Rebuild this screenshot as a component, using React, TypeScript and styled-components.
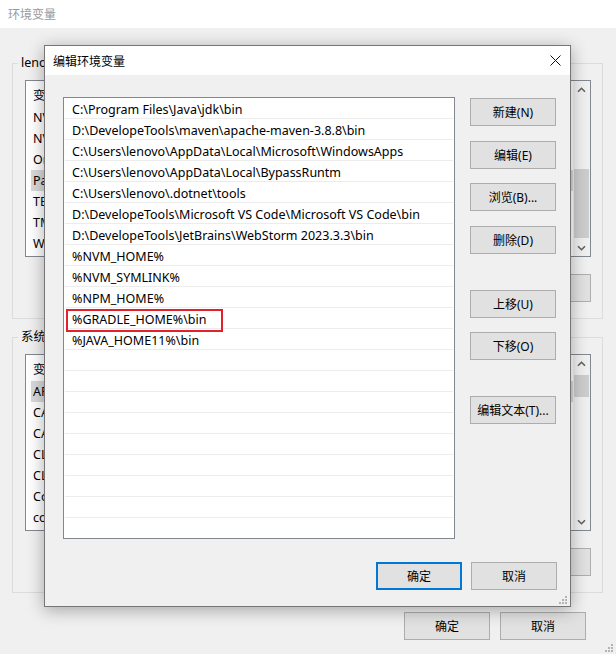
import React from "react";
import styled, { createGlobalStyle, css } from "styled-components";

const FONT = `"Microsoft YaHei UI", "Segoe UI", "Noto Sans", "Noto Sans CJK SC", sans-serif`;

const GlobalStyle = createGlobalStyle`
  html, body { margin: 0; padding: 0; background: #f0f0f0; }
  body { font-family: ${FONT}; font-size: 12px; color: #000; }
  * { box-sizing: border-box; }
`;

const Screen = styled.div`
  position: relative;
  width: 616px;
  height: 654px;
  overflow: hidden;
  background: #f0f0f0;
`;

/* ---------- background window: 环境变量 ---------- */

const BackWindow = styled.div`
  display: flex;
  flex-direction: column;
  width: 616px;
  height: 654px;
`;

const BackTitleBar = styled.div`
  height: 28px;
  flex: none;
  background: #fff;
  display: flex;
  align-items: center;
  padding-left: 8px;
  color: #9a9a9a;
  font-size: 12px;
`;

const BackBody = styled.div`
  flex: 1;
  display: flex;
  flex-direction: column;
  padding: 27px 13px 0 12px;
`;

const Group = styled.fieldset<{ $mt?: number }>`
  margin: ${(p) => p.$mt ?? 0}px 0 0 0;
  padding: 9px 11px 16px 12px;
  border: 1px solid #dcdcdc;
  display: flex;
  flex-direction: column;
  min-width: 0;
`;

const GroupLabel = styled.legend`
  margin-left: -7px;
  padding: 0 3px;
  line-height: 16px;
  font-size: 12.5px;
  white-space: nowrap;
`;

const VarList = styled.div`
  height: 177px;
  border: 1px solid #828790;
  background: #fff;
  display: flex;
`;

const VarListBody = styled.div`
  flex: 1;
  overflow: hidden;
  padding: 3px 0 0 5px;
  font-size: 12.5px;
`;

const VarHeader = styled.div`
  height: 23px;
  line-height: 23px;
  padding-left: 2px;
  white-space: nowrap;
`;

const VarRow = styled.div<{ $selected?: boolean }>`
  height: 21px;
  line-height: 22px;
  padding-left: 2px;
  white-space: nowrap;
  background: ${(p) => (p.$selected ? "#d9d9d9" : "transparent")};
`;

const ScrollBar = styled.div`
  width: 17px;
  flex: none;
  background: #f0f0f0;
  display: flex;
  flex-direction: column;
`;

const ScrollArrow = styled.div`
  height: 17px;
  flex: none;
  display: flex;
  align-items: center;
  justify-content: center;
`;

const ScrollTrack = styled.div`
  flex: 1;
  padding: 0 1px;
`;

const ScrollThumb = styled.div<{ $top: number; $height: number }>`
  margin-top: ${(p) => p.$top}px;
  height: ${(p) => p.$height}px;
  background: #cdcdcd;
`;

const GroupButtons = styled.div`
  margin-top: 17px;
  display: flex;
  justify-content: flex-end;
  gap: 10px;
`;

const BackFooter = styled.div`
  margin-top: 19px;
  display: flex;
  justify-content: flex-end;
  gap: 10px;
  padding-right: 17px;
`;

const Button = styled.button<{ $primary?: boolean; $mt?: number }>`
  width: 86px;
  height: 28px;
  flex: none;
  margin: ${(p) => p.$mt ?? 0}px 0 0 0;
  padding: 0;
  background: #e1e1e1;
  border: 1px solid #adadad;
  font-family: ${FONT};
  font-size: 12px;
  color: #000;
  white-space: nowrap;
  ${(p) =>
    p.$primary &&
    css`
      border: 2px solid #0078d7;
    `}
`;

const Grip = styled.svg<{ $right: number; $bottom: number }>`
  position: absolute;
  right: ${(p) => p.$right}px;
  bottom: ${(p) => p.$bottom}px;
`;

/* ---------- foreground dialog: 编辑环境变量 ---------- */

const Dialog = styled.div`
  position: absolute;
  left: 44px;
  top: 45px;
  width: 527px;
  height: 562px;
  border: 1px solid #767676;
  background: #f0f0f0;
  box-shadow: 0 3px 16px rgba(0, 0, 0, 0.32);
  display: flex;
  flex-direction: column;
`;

const DialogTitleBar = styled.div`
  height: 29px;
  flex: none;
  background: #fff;
  display: flex;
  align-items: center;
  justify-content: space-between;
  padding: 0 9px 0 8px;
  font-size: 12px;
  color: #000;
`;

const DialogBody = styled.div`
  flex: 1;
  display: flex;
  flex-direction: column;
  padding: 22px 13px 16px 18px;
`;

const DialogMain = styled.div`
  display: grid;
  grid-template-columns: 392px 86px;
  column-gap: 15px;
`;

const PathList = styled.div`
  height: 442px;
  border: 1px solid #828790;
  background: #fff;
  padding: 0 1px;
  overflow: hidden;
`;

const PathRow = styled.div`
  position: relative;
  height: 21px;
  line-height: 23px;
  border-bottom: 1px solid #ececec;
  padding-left: 7px;
  font-size: 12.5px;
  white-space: nowrap;
`;

const Highlight = styled.div`
  position: absolute;
  left: 1px;
  top: 1px;
  width: 157px;
  height: 23px;
  border: 2px solid #e3212b;
  pointer-events: none;
`;

const ButtonColumn = styled.div`
  display: flex;
  flex-direction: column;
  padding-top: 1px;
`;

const DialogFooter = styled.div`
  margin-top: 23px;
  display: flex;
  justify-content: flex-end;
  gap: 9px;
`;

/* ---------- drawings ---------- */

const Chevron = ({ down }: { down?: boolean }) => (
  <svg width="9" height="6" viewBox="0 0 9 6">
    <path
      d={down ? "M1 1.2 L4.5 4.7 L8 1.2" : "M1 4.8 L4.5 1.3 L8 4.8"}
      fill="none"
      stroke="#606060"
      strokeWidth="1.6"
    />
  </svg>
);

const CloseIcon = () => (
  <svg width="11" height="11" viewBox="0 0 11 11">
    <path d="M0.5 0.5 L10.5 10.5 M10.5 0.5 L0.5 10.5" stroke="#111" strokeWidth="1" />
  </svg>
);

const GripDots = ({ right, bottom }: { right: number; bottom: number }) => (
  <Grip $right={right} $bottom={bottom} width="8" height="8" viewBox="0 0 8 8">
    {[
      [6, 0],
      [3, 3],
      [6, 3],
      [0, 6],
      [3, 6],
      [6, 6],
    ].map(([x, y], i) => (
      <rect key={i} x={x} y={y} width="2" height="2" fill="#b4b4b4" />
    ))}
  </Grip>
);

const ScrollBox = ({ top, height }: { top: number; height: number }) => (
  <ScrollBar>
    <ScrollArrow>
      <Chevron />
    </ScrollArrow>
    <ScrollTrack>
      <ScrollThumb $top={top} $height={height} />
    </ScrollTrack>
    <ScrollArrow>
      <Chevron down />
    </ScrollArrow>
  </ScrollBar>
);

/* ---------- data ---------- */

const userVars = ["NVM_HOME", "NVM_SYMLINK", "OneDrive", "Path", "TEMP", "TMP", "WebStorm"];
const sysVars = ["APPDATA", "CATALINA_BASE", "CATALINA_HOME", "CLASSPATH", "CLASS_PATH", "ComSpec", "configsetroot"];

const paths = [
  "C:\\Program Files\\Java\\jdk\\bin",
  "D:\\DevelopeTools\\maven\\apache-maven-3.8.8\\bin",
  "C:\\Users\\lenovo\\AppData\\Local\\Microsoft\\WindowsApps",
  "C:\\Users\\lenovo\\AppData\\Local\\BypassRuntm",
  "C:\\Users\\lenovo\\.dotnet\\tools",
  "D:\\DevelopeTools\\Microsoft VS Code\\Microsoft VS Code\\bin",
  "D:\\DevelopeTools\\JetBrains\\WebStorm 2023.3.3\\bin",
  "%NVM_HOME%",
  "%NVM_SYMLINK%",
  "%NPM_HOME%",
  "%GRADLE_HOME%\\bin",
  "%JAVA_HOME11%\\bin",
];

const TOTAL_ROWS = 22;

export default function App() {
  const rows = Array.from({ length: TOTAL_ROWS }, (_, i) => paths[i] ?? "");
  return (
    <>
      <GlobalStyle />
      <Screen>
        <BackWindow>
          <BackTitleBar>环境变量</BackTitleBar>
          <BackBody>
            <Group>
              <GroupLabel>lenovo 的用户变量(U)</GroupLabel>
              <VarList>
                <VarListBody>
                  <VarHeader>变量</VarHeader>
                  {userVars.map((v) => (
                    <VarRow key={v} $selected={v === "Path"}>
                      {v}
                    </VarRow>
                  ))}
                </VarListBody>
                <ScrollBox top={71} height={69} />
              </VarList>
              <GroupButtons>
                <Button>新建(N)...</Button>
                <Button>编辑(E)...</Button>
                <Button>删除(D)</Button>
              </GroupButtons>
            </Group>
            <Group $mt={10}>
              <GroupLabel>系统变量(S)</GroupLabel>
              <VarList>
                <VarListBody>
                  <VarHeader>变量</VarHeader>
                  {sysVars.map((v) => (
                    <VarRow key={v} $selected={v === "APPDATA"}>
                      {v}
                    </VarRow>
                  ))}
                </VarListBody>
                <ScrollBox top={3} height={22} />
              </VarList>
              <GroupButtons>
                <Button>新建(W)...</Button>
                <Button>编辑(I)...</Button>
                <Button>删除(L)</Button>
              </GroupButtons>
            </Group>
            <BackFooter>
              <Button>确定</Button>
              <Button>取消</Button>
            </BackFooter>
          </BackBody>
          <GripDots right={3} bottom={2} />
        </BackWindow>

        <Dialog>
          <DialogTitleBar>
            <span>编辑环境变量</span>
            <CloseIcon />
          </DialogTitleBar>
          <DialogBody>
            <DialogMain>
              <PathList>
                {rows.map((p, i) => (
                  <PathRow key={i}>
                    {p}
                    {p === "%GRADLE_HOME%\\bin" && <Highlight />}
                  </PathRow>
                ))}
              </PathList>
              <ButtonColumn>
                <Button>新建(N)</Button>
                <Button $mt={15}>编辑(E)</Button>
                <Button $mt={14}>浏览(B)...</Button>
                <Button $mt={15}>删除(D)</Button>
                <Button $mt={36}>上移(U)</Button>
                <Button $mt={14}>下移(O)</Button>
                <Button $mt={36}>编辑文本(T)...</Button>
              </ButtonColumn>
            </DialogMain>
            <DialogFooter>
              <Button $primary>确定</Button>
              <Button>取消</Button>
            </DialogFooter>
          </DialogBody>
          <GripDots right={3} bottom={2} />
        </Dialog>
      </Screen>
    </>
  );
}
